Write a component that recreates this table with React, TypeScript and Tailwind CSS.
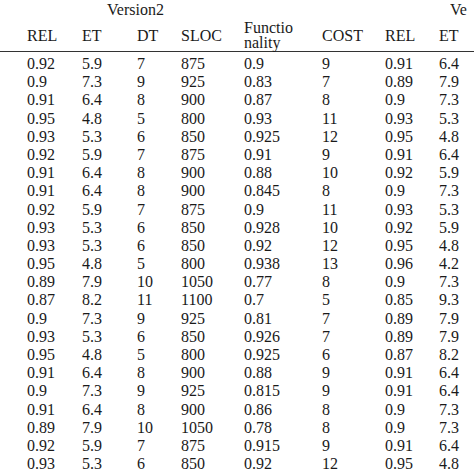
import React from 'react'

const rows: string[][] = [
  ['0.92', '5.9', '7', '875', '0.9', '9', '0.91', '6.4'],
  ['0.9', '7.3', '9', '925', '0.83', '7', '0.89', '7.9'],
  ['0.91', '6.4', '8', '900', '0.87', '8', '0.9', '7.3'],
  ['0.95', '4.8', '5', '800', '0.93', '11', '0.93', '5.3'],
  ['0.93', '5.3', '6', '850', '0.925', '12', '0.95', '4.8'],
  ['0.92', '5.9', '7', '875', '0.91', '9', '0.91', '6.4'],
  ['0.91', '6.4', '8', '900', '0.88', '10', '0.92', '5.9'],
  ['0.91', '6.4', '8', '900', '0.845', '8', '0.9', '7.3'],
  ['0.92', '5.9', '7', '875', '0.9', '11', '0.93', '5.3'],
  ['0.93', '5.3', '6', '850', '0.928', '10', '0.92', '5.9'],
  ['0.93', '5.3', '6', '850', '0.92', '12', '0.95', '4.8'],
  ['0.95', '4.8', '5', '800', '0.938', '13', '0.96', '4.2'],
  ['0.89', '7.9', '10', '1050', '0.77', '8', '0.9', '7.3'],
  ['0.87', '8.2', '11', '1100', '0.7', '5', '0.85', '9.3'],
  ['0.9', '7.3', '9', '925', '0.81', '7', '0.89', '7.9'],
  ['0.93', '5.3', '6', '850', '0.926', '7', '0.89', '7.9'],
  ['0.95', '4.8', '5', '800', '0.925', '6', '0.87', '8.2'],
  ['0.91', '6.4', '8', '900', '0.88', '9', '0.91', '6.4'],
  ['0.9', '7.3', '9', '925', '0.815', '9', '0.91', '6.4'],
  ['0.91', '6.4', '8', '900', '0.86', '8', '0.9', '7.3'],
  ['0.89', '7.9', '10', '1050', '0.78', '8', '0.9', '7.3'],
  ['0.92', '5.9', '7', '875', '0.915', '9', '0.91', '6.4'],
  ['0.93', '5.3', '6', '850', '0.92', '12', '0.95', '4.8'],
]

// column grid shared by header and body
const cols = 'grid grid-cols-[55px_55px_44px_63px_78px_63px_54px_1fr] pl-[27px]'

export default function App() {
  return (
    <div
      className="w-[474px] h-[474px] overflow-hidden bg-white text-[#1a1a1a] text-[16px] whitespace-nowrap"
      style={{ fontFamily: '"Liberation Serif", "Times New Roman", serif' }}
    >
      {/* version captions */}
      <div className="flex h-[20px] leading-[20px]">
        <span className="ml-[107px]">Version2</span>
        <span className="ml-auto w-[21px] mr-[3px] overflow-hidden">Ve</span>
      </div>

      {/* column headers */}
      <div className={`${cols} h-[32px] items-center leading-[18px] border-b border-[#333]`}>
        <span>REL</span>
        <span>ET</span>
        <span>DT</span>
        <span>SLOC</span>
        <span className="flex flex-col leading-[15px] -mt-[2px]">
          <span>Functio</span>
          <span>nality</span>
        </span>
        <span>COST</span>
        <span>REL</span>
        <span>ET</span>
      </div>

      {/* data */}
      <div className="pt-[3px]">
        {rows.map((r, i) => (
          <div key={i} className={`${cols} h-[18.2px] leading-[18.2px]`}>
            {r.map((v, j) => (
              <span key={j}>{v}</span>
            ))}
          </div>
        ))}
      </div>
    </div>
  )
}
